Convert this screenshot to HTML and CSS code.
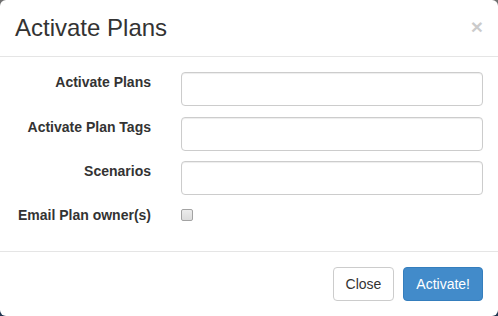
FILE: index.html
```html
<!DOCTYPE html>
<html>
<head>
<meta charset="utf-8">
<link rel="stylesheet" href="styles.css">
</head>
<body>
<div class="modal">
  <div class="modal-header">
    <button class="close" type="button">×</button>
    <h4 class="modal-title">Activate Plans</h4>
  </div>
  <div class="modal-body">
    <div class="form-group">
      <label class="control-label">Activate Plans</label>
      <div class="control"><input class="form-control" type="text"></div>
    </div>
    <div class="form-group">
      <label class="control-label">Activate Plan Tags</label>
      <div class="control"><input class="form-control" type="text"></div>
    </div>
    <div class="form-group third">
      <label class="control-label">Scenarios</label>
      <div class="control"><input class="form-control" type="text"></div>
    </div>
    <div class="form-group last">
      <label class="control-label">Email Plan owner(s)</label>
      <div class="control"><input class="checkbox" type="checkbox"></div>
    </div>
  </div>
  <div class="modal-footer">
    <button class="btn btn-default" type="button">Close</button>
    <button class="btn btn-primary" type="button">Activate!</button>
  </div>
</div>
</body>
</html>
```
FILE: styles.css
```css
html, body {
  margin: 0;
  padding: 0;
}
body {
  width: 498px;
  height: 316px;
  background: linear-gradient(#707070, #1f3550);
  font-family: "Liberation Sans", Arial, sans-serif;
  font-size: 14px;
  line-height: 1.42857;
  color: #333;
  overflow: hidden;
}
.modal {
  width: 498px;
  height: 316px;
  background: #fff;
  border-radius: 6px;
  overflow: hidden;
}
.modal-header {
  padding: 15px;
  border-bottom: 1px solid #e5e5e5;
}
.modal-title {
  margin: 0;
  font-size: 24px;
  font-weight: normal;
  line-height: 26px;
  color: #333;
}
.close {
  float: right;
  margin-top: 1px;
  padding: 0;
  border: 0;
  background: transparent;
  font-family: "Liberation Sans", Arial, sans-serif;
  font-size: 21px;
  font-weight: bold;
  line-height: 1;
  color: #000;
  opacity: 0.2;
}
.modal-body {
  padding: 15px;
}
.form-group {
  display: grid;
  grid-template-columns: 136px 302px;
  column-gap: 30px;
  margin-bottom: 10.5px;
}
.form-group.third {
  margin-bottom: 10px;
}
.form-group.last {
  margin-bottom: 10px;
}
.control-label {
  text-align: right;
  font-weight: bold;
  line-height: 20px;
  padding-top: 0;
}
.form-control {
  display: block;
  box-sizing: border-box;
  width: 302px;
  height: 34px;
  margin: 0;
  padding: 6px 12px;
  border: 1px solid #ccc;
  border-radius: 4px;
  box-shadow: inset 0 1px 1px rgba(0,0,0,0.075);
  background: #fff;
  font: inherit;
  outline: none;
}
.checkbox {
  appearance: none;
  -webkit-appearance: none;
  display: block;
  box-sizing: border-box;
  width: 12px;
  height: 12px;
  margin: 4px 0 5px;
  border: 1px solid #a3a3a3;
  border-radius: 2px;
  background: linear-gradient(#ececec, #dcdcdc);
}
.modal-footer {
  padding: 15px;
  border-top: 1px solid #e5e5e5;
  text-align: right;
  line-height: 0;
}
.btn {
  display: inline-block;
  box-sizing: border-box;
  height: 34px;
  margin: 0;
  padding: 6px 12px;
  border: 1px solid transparent;
  border-radius: 4px;
  font-family: "Liberation Sans", Arial, sans-serif;
  font-size: 14px;
  line-height: 20px;
  vertical-align: middle;
}
.btn + .btn {
  margin-left: 5px;
}
.btn-default {
  background: #fff;
  border-color: #ccc;
  color: #333;
}
.btn-primary {
  background: #428bca;
  border-color: #357ebd;
  color: #fff;
}
```
